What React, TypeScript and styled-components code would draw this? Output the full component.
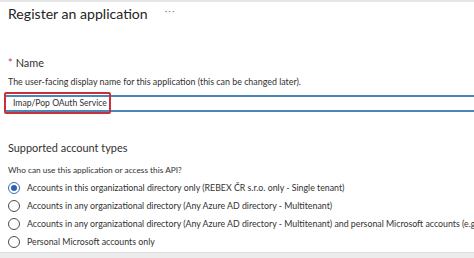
import React from "react";
import styled, { createGlobalStyle } from "styled-components";

const Global = createGlobalStyle`
  html, body { margin: 0; padding: 0; background: #fff; }
  body { font-family: Lato, "Noto Sans", sans-serif; color: #323130; }
  * { box-sizing: border-box; }
`;

const Frame = styled.div`
  width: 474px;
  height: 258px;
  overflow: hidden;
  border-top: 2px solid #e6e6e6;
  display: flex;
  flex-direction: column;
  position: relative;
`;

const Content = styled.div`
  flex: 1;
  padding: 0 0 0 8px;
  display: flex;
  flex-direction: column;
`;

const Header = styled.div`
  display: flex;
  align-items: center;
  gap: 17px;
  height: 22px;
`;

const Title = styled.h1`
  margin: 0;
  font-size: 14.1px;
  font-weight: 400;
  color: #252423;
  white-space: nowrap;
`;

const More = styled.span`
  font-size: 10px;
  color: #8a8886;
  letter-spacing: 1px;
  margin-top: -6px;
`;

const Label = styled.div<{ $top: number }>`
  margin-top: ${(p) => p.$top}px;
  font-size: 10.9px;
  color: #323130;
  line-height: 15px;
  white-space: nowrap;
`;

const Req = styled.span`
  color: #c4314b;
  margin-right: 3px;
`;

const Help = styled.div<{ $top: number; $size: number }>`
  margin-top: ${(p) => p.$top}px;
  font-size: ${(p) => p.$size}px;
  line-height: 13px;
  color: #323130;
  white-space: nowrap;
`;

const InputWrap = styled.div`
  margin-top: 4px;
  margin-left: -4px;
  position: relative;
  height: 22px;
  display: flex;
  align-items: center;
`;

const Input = styled.div`
  width: 478px;
  height: 17px;
  border-top: 2px solid #4a86b8;
  border-bottom: 2px solid #4a86b8;
  display: flex;
  align-items: center;
  padding-left: 9px;
  font-size: 8.6px;
  color: #323130;
  white-space: nowrap;
`;

const Highlight = styled.div`
  position: absolute;
  left: 0;
  top: 0;
  width: 107px;
  height: 22px;
  border: 2.5px solid #c8303a;
  border-radius: 2px;
`;

const Options = styled.div`
  margin-top: 4px;
  display: flex;
  flex-direction: column;
  gap: 5px;
`;

const Option = styled.label`
  display: flex;
  align-items: center;
  gap: 7px;
  height: 13px;
  font-size: 8.8px;
  color: #323130;
  white-space: nowrap;
`;

const Radio = styled.span<{ $checked?: boolean }>`
  width: 12px;
  height: 12px;
  border-radius: 50%;
  border: 1px solid ${(p) => (p.$checked ? "#3a6fb0" : "#4a4a4a")};
  display: flex;
  align-items: center;
  justify-content: center;
  flex-shrink: 0;
  &::after {
    content: "";
    width: 6px;
    height: 6px;
    border-radius: 50%;
    background: ${(p) => (p.$checked ? "#2b63b0" : "transparent")};
  }
`;

const Footer = styled.div`
  height: 6px;
  background: #ececec;
  border-top: 1px solid #dcdcdc;
`;

const options = [
  { text: "Accounts in this organizational directory only (REBEX ČR s.r.o. only - Single tenant)", checked: true },
  { text: "Accounts in any organizational directory (Any Azure AD directory - Multitenant)" },
  { text: "Accounts in any organizational directory (Any Azure AD directory - Multitenant) and personal Microsoft accounts (e.g. Skype, Xbox)" },
  { text: "Personal Microsoft accounts only" },
];

export default function App() {
  return (
    <Frame>
      <Global />
      <Content>
        <Header>
          <Title>Register an application</Title>
          <More>···</More>
        </Header>
        <Label $top={31}>
          <Req>*</Req>Name
        </Label>
        <Help $top={5} $size={8.9}>
          The user-facing display name for this application (this can be changed later).
        </Help>
        <InputWrap>
          <Input>Imap/Pop OAuth Service</Input>
          <Highlight />
        </InputWrap>
        <Label $top={26}>Supported account types</Label>
        <Help $top={9} $size={8.3}>Who can use this application or access this API?</Help>
        <Options>
          {options.map((o) => (
            <Option key={o.text}>
              <Radio $checked={o.checked} />
              {o.text}
            </Option>
          ))}
        </Options>
      </Content>
      <Footer />
    </Frame>
  );
}
